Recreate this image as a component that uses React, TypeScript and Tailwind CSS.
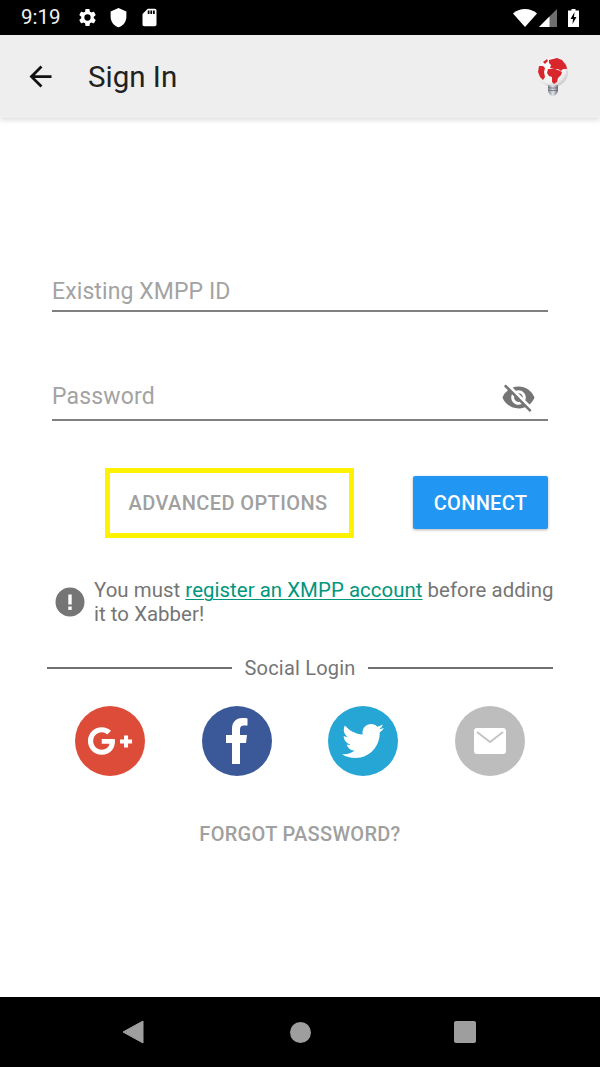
import React from "react";
import { FaGooglePlusG, FaTwitter } from "react-icons/fa";

function StatusBar() {
  return (
    <div className="h-[35px] bg-black flex items-center text-white shrink-0 pl-[21px] pr-[21px]">
      <span className="text-[20.5px] leading-none text-[#f2f2f2] w-[40px]">9:19</span>
      <svg className="ml-[16px]" width="21" height="21" viewBox="0 0 24 24" fill="#fff"><path d="M19.14 12.94c.04-.3.06-.61.06-.94 0-.32-.02-.64-.07-.94l2.03-1.58a.49.49 0 0 0 .12-.61l-1.92-3.32a.49.49 0 0 0-.59-.22l-2.39.96c-.5-.38-1.03-.7-1.62-.94l-.36-2.54a.48.48 0 0 0-.48-.41h-3.84c-.24 0-.43.17-.47.41l-.36 2.54c-.59.24-1.13.57-1.62.94l-2.39-.96a.48.48 0 0 0-.59.22L2.74 8.87c-.12.21-.08.47.12.61l2.03 1.58c-.05.3-.09.63-.09.94s.02.64.07.94l-2.03 1.58a.49.49 0 0 0-.12.61l1.92 3.32c.12.22.37.29.59.22l2.39-.96c.5.38 1.03.7 1.62.94l.36 2.54c.05.24.24.41.48.41h3.84c.24 0 .44-.17.47-.41l.36-2.54c.59-.24 1.13-.56 1.62-.94l2.39.96c.22.08.47 0 .59-.22l1.92-3.32c.12-.22.07-.47-.12-.61l-2.01-1.58zM12 15.6A3.6 3.6 0 1 1 12 8.4a3.600 3.600 0 0 1 0 7.200z"/></svg>
      <svg className="ml-[10px]" width="21" height="21" viewBox="0 0 24 24" fill="#fff"><path d="M12 1 3 5v6c0 5.55 3.84 10.74 9 12 5.16-1.26 9-6.45 9-12V5z"/></svg>
      <svg className="ml-[10px]" width="21" height="21" viewBox="0 0 24 24" fill="#fff"><path d="M18 2h-8L4 8v12c0 1.1.9 2 2 2h12c1.100 0 2-.9 2-2V4c0-1.100-.9-2-2-2zM12 8h-2V4h2zm3 0h-2V4h2zm3 0h-2V4h2z"/></svg>
      <div className="flex-1" />
      <svg width="24" height="18" viewBox="0 0 24 18"><path d="M0 4.500C3.200 1.700 7.400 0 12 0s8.800 1.700 12 4.500L12 18z" fill="#fff"/></svg>
      <svg className="ml-[2px]" width="18" height="18" viewBox="0 0 18 18"><path d="M0 18 18 0v18z" fill="#6e6e6e"/><path d="M0 18 10.500 7.500V18z" fill="#fff"/></svg>
      <svg className="ml-[11px]" width="11" height="18" viewBox="0 0 11 18"><path d="M3.500 0h4v1.500H11V18H0V1.500h3.500z" fill="#fff"/><path d="M6.500 3 2.500 10h2.500l-.5 5 4-7H6z" fill="#000"/></svg>
    </div>
  );
}

function GlobeBulb() {
  return (
    <svg width="32" height="40" viewBox="0 0 32 40">
      <defs>
        <radialGradient id="bulbGlass" cx="0.4" cy="0.35" r="0.72">
          <stop offset="0" stopColor="#ffffff" />
          <stop offset="0.7" stopColor="#f0f0f0" />
          <stop offset="1" stopColor="#bdbdbd" />
        </radialGradient>
        <linearGradient id="bulbBase" x1="0" x2="1" y1="0" y2="0">
          <stop offset="0" stopColor="#7f838f" />
          <stop offset="0.5" stopColor="#e4e6ea" />
          <stop offset="1" stopColor="#6b6e78" />
        </linearGradient>
      </defs>
      <path d="M11 26h10v4H11z" fill="#cfd1d6" />
      <circle cx="16" cy="15" r="15" fill="url(#bulbGlass)" />
      <path d="M12 3 20 1 25 3 29 8 30 12 26 12 24 14 21 12 17 12 13 11 14 8 12 6Z" fill="#d8262c" />
      <path d="M11 12 18 12 21 13 25 15 24 18 21 21 20 25 17 27 15 25 15 20 12 19 10 16Z" fill="#d8262c" />
      <path d="M2 9 6 9 8 11 7 15 8 20 6 23 3 20 1 15Z" fill="#d8262c" />
      <path d="M6 5 10 2 11 4 8 7Z" fill="#d8262c" />
      <path d="M11 28c3 .8 7 .8 10 0v5c0 2.500-2.200 6-5 6s-5-3.500-5-6z" fill="url(#bulbBase)" />
      <path d="M11 30.500c3 .8 7 .8 10 0M11 33c3 .8 7 .8 10 0" stroke="#62656f" strokeWidth="0.8" fill="none" />
    </svg>
  );
}

function Social({ bg, children }: { bg: string; children: React.ReactNode }) {
  return <div className={`w-[70px] h-[70px] rounded-full flex items-center justify-center text-white ${bg}`}>{children}</div>;
}

export default function App() {
  return (
    <div className="w-[600px] h-[1067px] bg-white flex flex-col overflow-hidden font-['Roboto',sans-serif]">
      <StatusBar />
      <header className="h-[83px] bg-[#eeeeee] flex items-center shrink-0 pl-[24px] pr-[31px] shadow-[0_2px_5px_rgba(0,0,0,0.14)] relative">
        <svg width="33" height="33" viewBox="0 0 24 24" fill="#111"><path d="M20 11H7.830l5.590-5.590L12 4l-8 8 8 8 1.410-1.410L7.830 13H20z"/></svg>
        <h1 className="ml-[31px] mt-[2px] text-[29.5px] font-normal text-[#212121] leading-none">Sign In</h1>
        <div className="flex-1" />
        <GlobeBulb />
      </header>

      <main className="flex-1 flex flex-col">
        <div className="px-[52px] pt-[154px]">
          <div className="h-[40px] border-b-2 border-[#808080] text-[23px] leading-[40px] text-[#a3a3a3] tracking-[0.1px]">Existing XMPP ID</div>
          <div className="mt-[68px] h-[41px] border-b-2 border-[#808080] text-[23px] leading-[34px] text-[#a3a3a3] tracking-[0.15px] flex justify-between">
            <span>Password</span>
            <svg className="mr-[12px]" width="35" height="35" viewBox="0 0 24 24" fill="#757575"><path d="M12 7c2.760 0 5 2.240 5 5 0 .65-.13 1.260-.36 1.830l2.920 2.920c1.510-1.260 2.700-2.890 3.430-4.750-1.730-4.390-6-7.500-11-7.500-1.400 0-2.740.25-3.980.7l2.160 2.160C10.740 7.130 11.350 7 12 7zM2 4.270l2.280 2.280.46.46A11.800 11.800 0 0 0 1 12c1.730 4.390 6 7.500 11 7.500 1.550 0 3.030-.3 4.380-.84l.42.42L19.730 22 21 20.730 3.270 3 2 4.270zM7.530 9.800l1.550 1.550c-.05.21-.08.43-.08.65 0 1.660 1.340 3 3 3 .22 0 .44-.03.65-.08l1.550 1.550c-.67.33-1.410.53-2.200.53-2.760 0-5-2.240-5-5 0-.79.2-1.530.53-2.200zm4.310-.78 3.150 3.150.02-.16c0-1.660-1.340-3-3-3l-.17.010z"/></svg>
          </div>
          <div className="mt-[47px] flex items-center justify-between pl-[53px]">
            <div className="w-[249px] h-[70px] border-[5px] border-[#fff200] pr-[3px] flex items-center justify-center text-[20px] font-medium text-[#a0a0a0] tracking-[0.4px]">ADVANCED OPTIONS</div>
            <div className="w-[135px] h-[53px] mb-[1px] bg-[#2196f3] rounded-[2px] shadow-[0_1px_3px_rgba(0,0,0,0.3)] flex items-center justify-center text-[20px] font-medium text-white tracking-[0.3px]">CONNECT</div>
          </div>
        </div>

        <div className="mt-[40px] pl-[55px] pr-[40px] flex items-center">
          <svg className="shrink-0" width="30" height="30" viewBox="0 0 30 30"><circle cx="15" cy="15" r="14.500" fill="#757575"/><rect x="13.300" y="7.500" width="3.400" height="10" fill="#fff"/><rect x="13.300" y="19.500" width="3.400" height="3.400" fill="#fff"/></svg>
          <p className="ml-[9px] text-[20.4px] leading-[24px] text-[#757575] tracking-[0.05px]">You must <span className="text-[#00967d] underline underline-offset-2 decoration-1">register an XMPP account</span> before adding it to Xabber!</p>
        </div>

        <div className="mt-[30px] px-[47px] flex items-center">
          <div className="flex-1 h-[2px] bg-[#707070]" />
          <span className="mx-[12px] text-[20px] leading-[24px] text-[#757575] tracking-[0.2px]">Social Login</span>
          <div className="flex-1 h-[2px] bg-[#707070]" />
        </div>

        <div className="mt-[26px] pl-[75px] flex gap-[56.500px]">
          <Social bg="bg-[#dd4b39]"><FaGooglePlusG size={46} /></Social>
          <Social bg="bg-[#3b5998]">
            <svg width="22" height="46" viewBox="0 0 22 46" fill="#fff"><path d="M6 46V25H0v-8h6v-6C6 4 10 0 16 0c2.500 0 4.500.2 5.500.4v7H18c-3 0-4 1.500-4 4v5.600h7l-1 8h-6v21z"/></svg>
          </Social>
          <Social bg="bg-[#26a6d5]"><FaTwitter size={42} /></Social>
          <Social bg="bg-[#bdbdbd]">
            <svg width="32" height="26" viewBox="0 0 32 26"><rect width="32" height="26" rx="3" fill="#fff"/><path d="M3 4l13 10 13-10" fill="none" stroke="#c4c4c4" strokeWidth="2"/></svg>
          </Social>
        </div>

        <div className="mt-[46px] text-center text-[20px] leading-[24px] font-medium text-[#a0a0a0] tracking-[0.3px]">FORGOT PASSWORD?</div>
      </main>

      <nav className="h-[70px] bg-black shrink-0 flex items-center pl-[122px] pr-[124px] justify-between">
        <svg width="22" height="24" viewBox="0 0 22 24"><path d="M21 1v22L1 12z" fill="#9e9e9e" stroke="#9e9e9e" strokeLinejoin="round"/></svg>
        <div className="w-[21px] h-[21px] rounded-full bg-[#9e9e9e] ml-[3px]" />
        <div className="w-[22px] h-[22px] rounded-[2px] bg-[#9e9e9e]" />
      </nav>
    </div>
  );
}
